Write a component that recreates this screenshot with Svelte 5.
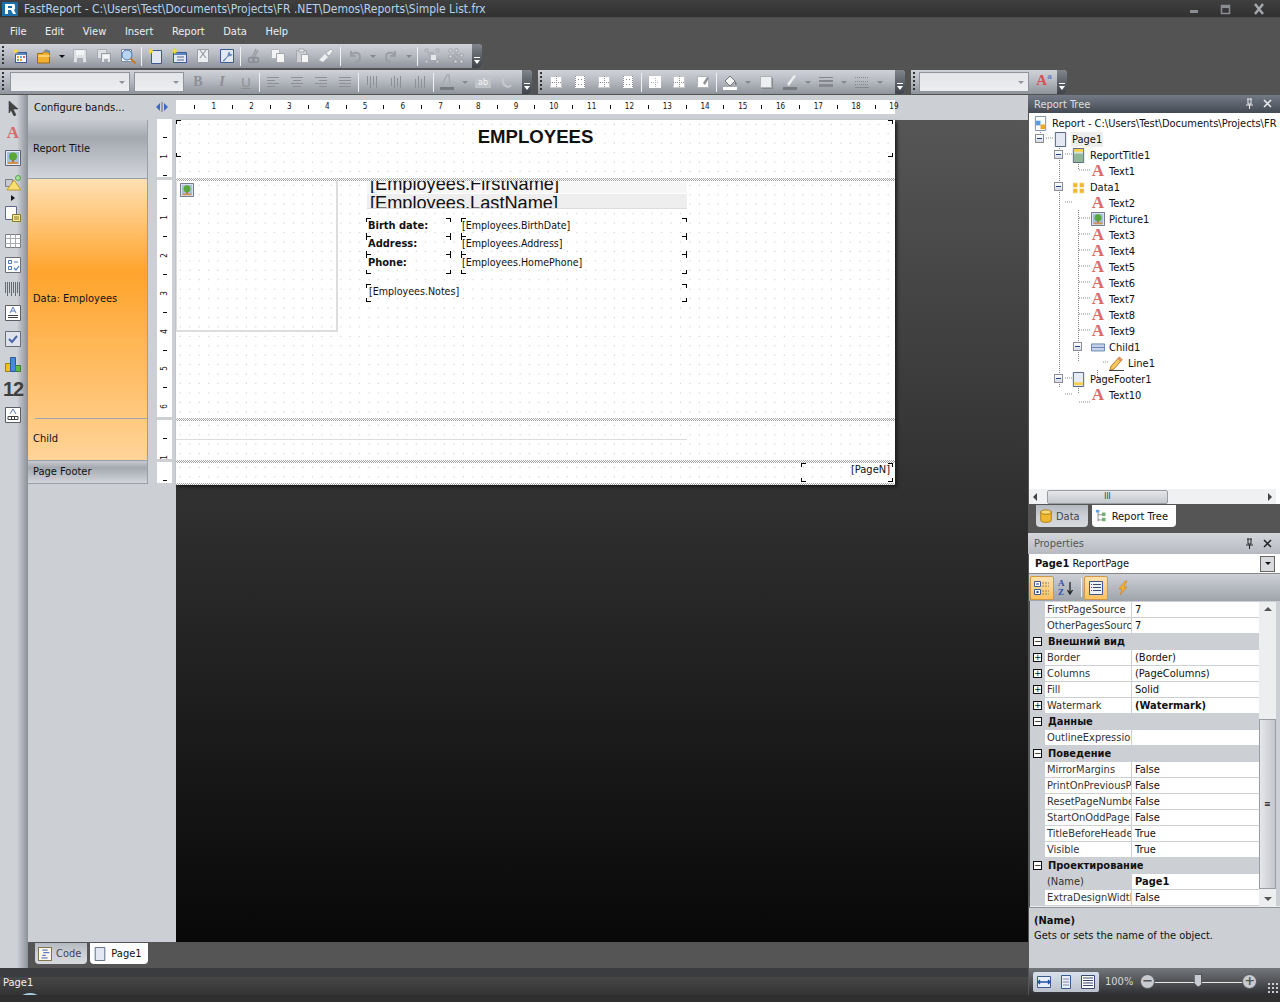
<script>
  // every icon is a 16x16 svg body
  const page = '<path d="M2.5 .5h11v15h-11z" fill="#e3e8f2" stroke="#4a5a78"/>'
  const ic = {
    arrow: '<path d="M4 1l9 8H8l3 6-2 1-3-6-2 3z" fill="#444" stroke="#222" stroke-width=".5"/>',
    newrep: '<rect x="3.5" y="4.5" width="11" height="10" fill="#fff" stroke="#3a5a90"/><path d="M4 5h10v2H4z" fill="#5a86c8"/><path d="M5 8h2v2H5z" fill="#e8a030"/><path d="M8 8h2v2H8z" fill="#60a8e0"/><path d="M11 8h2v2h-2z" fill="#e06060"/><path d="M5 11h2v2H5z" fill="#70b060"/><path d="M8 11h2v2H8z" fill="#e8a030"/><path d="M3.5 0l.8 2 2-.6-1 1.8 1.4 1-2 .4-.9 2-.9-2-2-.4 1.4-1-1-1.8 2 .6z" fill="#f8d838"/>',
    open: '<path d="M1.5 5.5h5l1-1.5h6v11h-12z" fill="#f0b030" stroke="#a06810"/><path d="M2 8h12" stroke="#fff0b0"/><path d="M8 3c1-2 4-2 5 0l1-1v3h-3l1-1c-1-1-2-1-3 0z" fill="#7088a8"/>',
    save: '<path d="M1.5 1.5h13v13h-13z" fill="#dfe1e5" stroke="#aaadb3"/><path d="M4 2h8v5H4z" fill="#f2f3f4"/><path d="M5 10h6v4H5z" fill="#a9acb2"/>',
    saveall: '<path d="M1.5 1.5h9v9h-9z" fill="#dfe1e5" stroke="#aaadb3"/><path d="M5.5 5.5h9v9h-9z" fill="#e6e7ea" stroke="#9a9da3"/><path d="M7 7h6v3H7z" fill="#f6f6f7"/><path d="M8 11h4v3H8z" fill="#a9acb2"/>',
    preview: '<path d="M1.500 1.500h10v12h-10z" fill="#fff" stroke="#7a8aa8"/><circle cx="7" cy="7" r="5" fill="#b8d4f0" stroke="#4a78b0"/><path d="M10.500 10.500l5 5" stroke="#c87820" stroke-width="2"/>',
    newpage: '<path d="M4.5 2.5h10v13h-10z" fill="#e3e8f2" stroke="#3a5a90"/><path d="M3.5 0l.8 2 2-.6-1 1.8 1.4 1-2 .4-.9 2-.9-2-2-.4 1.4-1-1-1.8 2 .6z" fill="#f8d838"/>',
    newdlg: '<path d="M2.5 4.5h13v10h-13z" fill="#e3e8f2" stroke="#3a5a90"/><path d="M3 5h12v2H3z" fill="#5a86c8"/><path d="M6 9h7M6 12h7" stroke="#5a6a88"/><path d="M3.5 0l.8 2 2-.6-1 1.8 1.4 1-2 .4-.9 2-.9-2-2-.4 1.4-1-1-1.8 2 .6z" fill="#f8d838"/>',
    delpage: '<path d="M2.5 1.5h11v13h-11z" fill="#eceef2" stroke="#9a9da3"/><path d="M5 2l3 4 3-4M5 10l3-4 3 4" fill="none" stroke="#9a9da3" stroke-width="1.2"/>',
    setup: '<path d="M1.5 1.5h13v13h-13z" fill="#e3e8f2" stroke="#3a5a90"/><path d="M3 13l5-5 1-4 3-1-1 2 1 1 2-1-1 3-4 1-4 5z" fill="#6a8ab8" stroke="#fff" stroke-width=".5"/>',
    cut: '<path d="M10 1L6 10M12 2L8 10" stroke="#9a9da3" stroke-width="1.5"/><circle cx="5" cy="12" r="2.5" fill="none" stroke="#8a8d93" stroke-width="1.5"/><circle cx="10" cy="12" r="2.5" fill="none" stroke="#8a8d93" stroke-width="1.5"/>',
    copy: '<path d="M1.5 1.5h8v9h-8z" fill="#f2f3f4" stroke="#b4b7bc"/><path d="M6.5 5.5h8v9h-8z" fill="#f6f6f7" stroke="#a4a7ac"/>',
    paste: '<path d="M2.5 2.5h10v12h-10z" fill="#cfd1d5" stroke="#a4a7ac"/><path d="M5 1h5v3H5z" fill="#e6e7ea" stroke="#a4a7ac"/><path d="M7.5 6.5h7v8h-7z" fill="#f6f6f7" stroke="#a4a7ac"/>',
    brush: '<path d="M1 12l6-6 3 3-5 5z" fill="#eceef0"/><path d="M8 5l5-4 2 2-4 5z" fill="#f4f4f5" stroke="#b0b3b8"/>',
    undo: '<path d="M4 3v5h5M4 8c2-5 9-4 9 1 0 3-2 5-5 5" fill="none" stroke="#9b9ea4" stroke-width="2"/>',
    redo: '<path d="M12 3v5H7M12 8c-2-5-9-4-9 1 0 3 2 5 5 5" fill="none" stroke="#9b9ea4" stroke-width="2"/>',
    group: '<path d="M1 1h3v3H1zM12 1h3v3h-3zM1 12h3v3H1zM12 12h3v3h-3z" fill="#c4c6ca" stroke="#9a9da3" stroke-width=".6"/><path d="M4 4h6v5H4z" fill="#aeb1b6"/><path d="M7 7h5v5H7z" fill="#e6e7ea"/>',
    ungroup: '<path d="M1 1h3v3H1zM7 1h3v3H7zM1 7h3v3H1zM7 7h3v3H7zM6 6h3v3H6zM12 6h3v3h-3zM6 12h3v3H6zM12 12h3v3h-3z" fill="#d6d8db" stroke="#8a8d93" stroke-width=".6"/>',
    alignl: '<path d="M2 3.500h12M2 6.500h8M2 9.500h12M2 12.500h8" stroke="#8d9096"/>',
    alignc: '<path d="M2 3.500h12M4 6.500h8M2 9.500h12M4 12.500h8" stroke="#8d9096"/>',
    alignr: '<path d="M2 3.500h12M6 6.500h8M2 9.500h12M6 12.500h8" stroke="#8d9096"/>',
    alignj: '<path d="M2 3.500h12M2 6.500h12M2 9.500h12M2 12.500h12" stroke="#8d9096"/>',
    vtop: '<path d="M3.500 2v9M6.500 2v12M9.500 2v9M12.500 2v12" stroke="#8d9096"/>',
    vmid: '<path d="M3.500 4v8M6.500 2v12M9.500 4v8M12.500 2v12" stroke="#8d9096"/>',
    vbot: '<path d="M3.500 5v9M6.500 2v12M9.500 5v9M12.500 2v12" stroke="#8d9096"/>',
    fcolor: '<path d="M3 11l5-10h2l1 10" fill="none" stroke="#a6a9ae" stroke-width="1.5"/><path d="M1 13h14v3H1z" fill="#767980"/>',
    rot: '<path d="M12 3c-4-3-9 0-8 5s6 6 8 3" fill="none" stroke="#c6c8cc" stroke-width="2"/>',
    bd1: '<path d="M2 2h12v12H2z" fill="#fff"/><path d="M2.500 2.500h11v11h-11zM2 8.500h12M8.500 2v12" fill="none" stroke="#8d9096" stroke-dasharray="1 1"/>',
    bd2: '<path d="M3 2h10v12H3z" fill="#fff"/><path d="M3.500 2v12M12.500 2v12M6.500 5v1M9.500 5v1M6.500 10v1M9.500 10v1" stroke="#85888e" stroke-dasharray="1 1"/>',
    bd3: '<path d="M2 2h12v12H2z" fill="#fff"/><path d="M8.500 4v9M4 8.500h8" stroke="#b0b3b8" stroke-dasharray="1 1"/>',
    bd5: '<path d="M2.500 2.500h11v11h-11z" fill="#fff" stroke="#b0b3b8"/><path d="M8 9l4-6 2 1-4 7z" fill="#8d9096"/>',
    fill: '<path d="M3 7l5-5 5 5-5 5z" fill="#f4f4f5" stroke="#6f7278"/><path d="M13 7c2 2 2 4 1 4s-1-2-1-4z" fill="#6f7278"/><path d="M1 13h14v3H1z" fill="#fff"/>',
    shadow: '<path d="M2.500 2.500h11v11h-11z" fill="#eeeff1" stroke="#aeb1b6"/><path d="M14.500 4v10.500H4" fill="none" stroke="#85888e"/>',
    lcolor: '<path d="M5 10L12 1l2 1-7 10z" fill="#eceef0"/><path d="M1 13h14v3H1z" fill="#767980"/>',
    lwidth: '<path d="M1 3h14v1H1z" fill="#85888e"/><path d="M1 6h14v2H1z" fill="#85888e"/><path d="M1 10h14v3H1z" fill="#85888e"/>',
    lstyle: '<path d="M1 3.500h14M1 7.500h14M1 10.500h14" stroke="#85888e" stroke-dasharray="1 1"/><path d="M1 13.500h14" stroke="#85888e"/>',
    picture: '<path d="M.5 .5h15v15H.5z" fill="#e8ecf4" stroke="#5a6478"/><path d="M2 2h12v12H2z" fill="#a8c0e0"/><circle cx="8" cy="6.500" r="4" fill="#58a838"/><path d="M7 10h2v3H7z" fill="#a87038"/><path d="M3 12h10v2H3z" fill="#d09050"/>',
    shapes: '<path d="M.5 4.500h7v7h-7z" fill="#c8cacf" stroke="#7a7d84"/><circle cx="13" cy="3" r="2.500" fill="#a8e0a0" stroke="#58a050"/><path d="M9 5l7 10H2z" fill="#f8e070" stroke="#c09830"/>',
    subrep: '<path d="M.5 .5h11v13H.5z" fill="#fff" stroke="#5a6a88"/><path d="M7.500 8.500h8v7h-8z" fill="#f8e8a0" stroke="#8a7a30"/><path d="M9 11h5M9 13h5" stroke="#8a7a30"/>',
    table: '<path d="M.5 1.500h15v13H.5z" fill="#fff" stroke="#7a7d84"/><path d="M.5 5.500h15M.5 10.500h15M5.500 1.500v13M10.500 1.500v13" stroke="#a8abb0"/>',
    matrix: '<path d="M.5 .5h15v15H.5z" fill="#fff" stroke="#6a6d74"/><path d="M3.500 3.500h3v3h-3zM3.500 9.500h3v3h-3z" fill="none" stroke="#4a78b0"/><path d="M9 5h4M9 11l2 2 3-4" fill="none" stroke="#4a78b0" stroke-width="1.200"/>',
    barcode: '<path d="M.5 1v11M2.500 1v14M4.500 1v11M6.500 1v14M8.500 1v11M10.500 1v14M12.500 1v11M14.500 1v14" stroke="#666a72"/>',
    rich: '<path d="M.5 .5h15v15H.5z" fill="#fff" stroke="#5a5d64"/><path d="M5 8l3-6 3 6M6 6h4" fill="none" stroke="#5a7ab8"/><path d="M3 10.500h10M3 12.500h10" stroke="#444"/>',
    check: '<path d="M.5 .5h15v15H.5z" fill="#dfe3ee" stroke="#6a6d74"/><path d="M4 8l3 3 5-6" fill="none" stroke="#4a68a8" stroke-width="2"/>',
    chart: '<path d="M.5 7.500h5v8h-5z" fill="#f0c020" stroke="#a08010"/><path d="M5.500 1.500h5v14h-5z" fill="#4a88d8" stroke="#2a5aa0"/><path d="M10.500 9.500h5v6h-5z" fill="#60b848" stroke="#3a8030"/>',
    cell: '<path d="M.5 .5h15v15H.5z" fill="#fff" stroke="#5a5d64"/><path d="M5 7l3-5 3 5" fill="none" stroke="#5a7ab8"/><path d="M3 9.500h10v3H3zM6.500 9.500v3M9.500 9.500v3" fill="none" stroke="#444"/>',
    report: '<path d="M2.500 .5h11v15h-11z" fill="#fff" stroke="#7a8aa8"/><path d="M3 5h5v5H3z" fill="#5a9ae0"/><path d="M8 9h5v5H8z" fill="#f0a820"/>',
    page,
    title: '<path d="M2.500 .5h11v15h-11z" fill="#d8e4d8" stroke="#4a5a78"/><path d="M3 1h10v3H3z" fill="#f8d048"/><path d="M3 6h10v9H3z" fill="#90b898"/>',
    data: '<path d="M2 3h5v5H2zM9 3h5v5H9zM2 9h5v5H2zM9 9h5v5H9z" fill="#f0b830" stroke="#fff" stroke-width=".5"/>',
    child: '<path d="M.5 4.500h15v8H.5z" fill="#c8d4ec" stroke="#5a7aa8"/><path d="M.5 8.500h15" stroke="#5a7aa8"/>',
    pencil: '<path d="M2 11L11 1l3 3-9 10-4 1z" fill="#f8c860" stroke="#b07820"/><path d="M11 1l3 3-2 2-3-3z" fill="#e89060"/><path d="M0 15.500h16" stroke="#333"/>',
    footer: '<path d="M2.500 .5h11v15h-11z" fill="#e6ebf4" stroke="#4a5a78"/><path d="M3 11h10v3H3z" fill="#f8d048"/>',
    db: '<path d="M2 3h12v10c0 3-12 3-12 0z" fill="#f0b830" stroke="#a87810"/><ellipse cx="8" cy="3.500" rx="6" ry="2.500" fill="#f8d878" stroke="#a87810"/>',
    rtree: '<path d="M3.500 2v12M3 6.500h5M3 12.500h5" stroke="#888" fill="none"/><path d="M1 1h4v3H1z" fill="#60a0e0"/><path d="M8 4h4v4H8z" fill="#70b070"/><path d="M8 10h4v4H8z" fill="#70b070"/>',
    code: '<path d="M.5 .5h15v15H.5z" fill="#fdf8e8" stroke="#6a5a30"/><path d="M5 3.500h6M6 6.500h7M5 9.500h4M4 12.500h7" stroke="#2048c0"/>',
    cat: '<path d="M.5 1.500h6v5h-6zM.5 9.500h6v5h-6z" fill="#fff" stroke="#3a5a90"/><path d="M2 4h3M2 12h3M3.500 11v2" stroke="#204080"/><path d="M8 3h7M8 6h7M8 11h7M8 14h7" stroke="#8a8060" stroke-dasharray="2 1"/>',
    az: '<path d="M12 2v11M9.500 10l2.500 4 2.500-4" fill="none" stroke="#222" stroke-width="1.300"/>',
    list: '<path d="M1.500 1.500h13v13h-13z" fill="#eef2fa" stroke="#3a5a90"/><path d="M3 4.500h1M5 4.500h8M3 7.500h1M5 7.500h8M3 10.500h1M5 10.500h8" stroke="#3a4a70"/>',
    bolt: '<path d="M10 1L4 9h3l-2 6 7-8H9l3-6z" fill="#f0b030" stroke="#c87020" stroke-width=".5"/>',
    fit: '<path d="M1.500 2.500h13v11h-13z" fill="#e8eefa" stroke="#3a5a90"/><path d="M2 8h12M4 6L2 8l2 2M12 6l2 2-2 2" fill="none" stroke="#2050a0" stroke-width="1.300"/>',
    one: '<path d="M3.500 1.500h9v13h-9z" fill="#e8eefa" stroke="#3a5a90"/><path d="M5 5h6M5 8h6M5 11h6" stroke="#7a8aa8"/>',
    lines: '<path d="M1.500 1.500h13v13h-13z" fill="#fff" stroke="#3a4a70"/><path d="M3 4h10M3 6.500h10M3 9h10M3 11.500h10" stroke="#3a4a70"/>'
  }

  const tools1 = [
    { i: 'newrep' }, { i: 'open' }, { drop: 1, dark: 1 }, { i: 'save' }, { i: 'saveall' }, { i: 'preview' }, { sep: 1 },
    { i: 'newpage' }, { i: 'newdlg' }, { i: 'delpage' }, { i: 'setup' }, { sep: 1 },
    { i: 'cut' }, { i: 'copy' }, { i: 'paste' }, { i: 'brush' }, { sep: 1, wide: 1 },
    { i: 'undo' }, { drop: 1 }, { i: 'redo' }, { drop: 1 }, { sep: 1, wide: 1 }, { i: 'group' }, { i: 'ungroup' }
  ]
  const tools2a = [
    { t: 'B', c: 'b' }, { t: 'I', c: 'it' }, { t: 'U', c: 'un' }, { sep: 1 },
    { i: 'alignl' }, { i: 'alignc' }, { i: 'alignr' }, { i: 'alignj' }, { sep: 1 },
    { i: 'vtop' }, { i: 'vmid' }, { i: 'vbot' }, { sep: 1 },
    { i: 'fcolor' }, { drop: 1 }, { t: 'ab', c: 'abx' }, { i: 'rot' }
  ]
  const tools2b = [
    { i: 'bd1' }, { i: 'bd2' }, { i: 'bd1' }, { i: 'bd2' }, { sep: 1 },
    { i: 'bd3' }, { i: 'bd1' }, { i: 'bd5' }, { sep: 1 },
    { i: 'fill' }, { drop: 1 }, { i: 'shadow' }, { i: 'lcolor' }, { drop: 1 }, { i: 'lwidth' }, { drop: 1 }, { i: 'lstyle' }, { drop: 1 }
  ]
  const palette = [
    { i: 'arrow', h: 25 }, { a: 1, h: 25 }, { i: 'picture', h: 25 }, { i: 'shapes', h: 25 }, { more: 1, h: 5 },
    { i: 'subrep', h: 28 }, { i: 'table', h: 25 }, { i: 'matrix', h: 24 }, { i: 'barcode', h: 23 },
    { i: 'rich', h: 26 }, { i: 'check', h: 25 }, { i: 'chart', h: 25 }, { num: 1, h: 27 }, { i: 'cell', h: 24 }
  ]

  const menu = ['File', 'Edit', 'View', 'Insert', 'Report', 'Data', 'Help']

  const tree = [
    { x: 4, i: 'report', t: 'Report - C:\\Users\\Test\\Documents\\Projects\\FR .NET\\Demos\\Reports\\Simple List.frx' },
    { x: 24, i: 'page', t: 'Page1', tg: 11, sel: 1 },
    { x: 42, i: 'title', t: 'ReportTitle1', tg: 30 },
    { x: 62, a: 1, t: 'Text1' },
    { x: 42, i: 'data', t: 'Data1', tg: 30 },
    { x: 62, a: 1, t: 'Text2' },
    { x: 62, i: 'picture', t: 'Picture1', w: 14 },
    { x: 62, a: 1, t: 'Text3' },
    { x: 62, a: 1, t: 'Text4' },
    { x: 62, a: 1, t: 'Text5' },
    { x: 62, a: 1, t: 'Text6' },
    { x: 62, a: 1, t: 'Text7' },
    { x: 62, a: 1, t: 'Text8' },
    { x: 62, a: 1, t: 'Text9' },
    { x: 62, i: 'child', t: 'Child1', tg: 49, w: 14 },
    { x: 80, i: 'pencil', t: 'Line1' },
    { x: 42, i: 'footer', t: 'PageFooter1', tg: 30 },
    { x: 62, a: 1, t: 'Text10' }
  ]

  const props = [
    { n: 'FirstPageSource', v: '7' },
    { n: 'OtherPagesSource', v: '7' },
    { cat: 'Внешний вид' },
    { n: 'Border', v: '(Border)', plus: 1 },
    { n: 'Columns', v: '(PageColumns)', plus: 1 },
    { n: 'Fill', v: 'Solid', plus: 1 },
    { n: 'Watermark', v: '(Watermark)', plus: 1, bold: 1 },
    { cat: 'Данные' },
    { n: 'OutlineExpression', v: '' },
    { cat: 'Поведение' },
    { n: 'MirrorMargins', v: 'False' },
    { n: 'PrintOnPreviousPage', v: 'False' },
    { n: 'ResetPageNumber', v: 'False' },
    { n: 'StartOnOddPage', v: 'False' },
    { n: 'TitleBeforeHeader', v: 'True' },
    { n: 'Visible', v: 'True' },
    { cat: 'Проектирование' },
    { n: '(Name)', v: 'Page1', bold: 1, sel: 1 },
    { n: 'ExtraDesignWidth', v: 'False' }
  ]

  const cm = Array.from({ length: 19 }, (_, k) => k + 1)
  const vbands = [
    { h: 58, n: 1 },
    { h: 237, n: 6 },
    { h: 39, n: 1 },
    { h: 21, n: 0 }
  ]
  const vcm = (n) => Array.from({ length: n + 1 }, (_, k) => k + 1)
</script>

{#snippet icon(name, size = 16)}
  <svg class="ico" width={size} height={size} viewBox="0 0 16 16">{@html ic[name]}</svg>
{/snippet}

{#snippet toolItems(items)}
  {#each items as it}
    {#if it.sep}
      <span class="sep" class:wide={it.wide}></span>
    {:else if it.drop}
      <span class="drop" class:dark={it.dark}><i></i></span>
    {:else if it.t}
      <span class="tool {it.c}">{it.t}</span>
    {:else}
      <span class="tool">{@render icon(it.i)}</span>
    {/if}
  {/each}
{/snippet}

{#snippet over()}
  <span class="over"><b></b><i></i></span>
{/snippet}

{#snippet pane(title, light)}
  <div class="pane-head" class:light>
    <span>{title}</span>
    <svg width="34" height="12" viewBox="0 0 34 12">
      <path d="M4 1h5M5 1v5h3V1M3 7h7M6.500 7v4" fill="none" stroke={light ? '#222' : '#eee'} />
      <path d="M21 2l7 7M28 2l-7 7" stroke={light ? '#222' : '#eee'} stroke-width="1.500" />
    </svg>
  </div>
{/snippet}

<div class="app">
  <header class="title">
    <svg class="logo" width="16" height="14" viewBox="0 0 16 14">
      <path d="M0 0h16v14H0z" fill="#1c6fa8" />
      <path d="M3 2h9l1 1v4l-1 1 2 4h-3L9 8H6v4H3zM6 4v2h4V4z" fill="#fff" />
    </svg>
    <span class="title-text">FastReport - C:\Users\Test\Documents\Projects\FR .NET\Demos\Reports\Simple List.frx</span>
    <span class="win">
      <svg width="90" height="14" viewBox="0 0 90 14">
        <path d="M3 8h8v3H3z" fill="#8a8d92" />
        <path d="M34.500 3.500h8v8h-8z" fill="none" stroke="#8a8d92" stroke-width="1.500" /><path d="M34 3h9v3h-9z" fill="#8a8d92" />
        <path d="M68 2l8 10M76 2l-8 10" stroke="#a4a7ac" stroke-width="2.500" />
      </svg>
    </span>
  </header>

  <nav class="menu">
    {#each menu as m}<span>{m}</span>{/each}
  </nav>

  <div class="bars">
    <div class="row">
      <div class="bar" style="width:482px">
        <span class="grip"></span>
        {@render toolItems(tools1)}
        {@render over()}
      </div>
    </div>
    <div class="row">
      <div class="bar" style="width:532px">
        <span class="grip"></span>
        <span class="combo" style="width:120px"></span>
        <span class="combo" style="width:50px"></span>
        {@render toolItems(tools2a)}
        {@render over()}
      </div>
      <div class="bar" style="width:367px">
        <span class="grip tight"></span>
        {@render toolItems(tools2b)}
        {@render over()}
      </div>
      <div class="bar" style="width:156px">
        <span class="grip tight"></span>
        <span class="combo" style="width:110px"></span>
        <span class="tool aa">A<sup>a</sup></span>
        {@render over()}
      </div>
    </div>
  </div>

  <div class="body">
    <div class="left">
      <div class="upper">
        <aside class="palette">
          {#each palette as p}
            <span class="pal" style="height:{p.h}px">
              {#if p.a}<span class="a-ico">A</span>
              {:else if p.more}<i class="more"></i>
              {:else if p.num}<span class="num">12</span>
              {:else}{@render icon(p.i)}{/if}
            </span>
          {/each}
        </aside>

        <section class="designer">
          <div class="rule-row">
            <span class="conf">Configure bands...</span>
            <span class="arrows"><i class="la"></i><i class="bar-mid"></i><i class="ra"></i></span>
            <div class="hruler">
              {#each cm as k}
                <span class="cell"><i></i></span><span class="cell">{k}</span>
              {/each}
            </div>
          </div>

          <div class="canvas-row">
            <div class="bands">
              <div class="band gray" style="height:59px"><span>Report Title</span></div>
              <div class="band orange" style="height:282px">
                <div class="band-data"><span>Data: Employees</span></div>
                <div class="band-child"><span>Child</span></div>
              </div>
              <div class="band gray" style="height:23px"><span>Page Footer</span></div>
            </div>

            <div class="vruler">
              {#each vbands as b}
                <div class="vseg" style="height:{b.h}px">
                  <span class="vcell"><i></i></span>
                  {#each vcm(b.n) as k}
                    <span class="vcell"><em>{k}</em></span>
                    {#if k <= b.n}<span class="vcell"><i></i></span>{/if}
                  {/each}
                </div>
              {/each}
            </div>

            <div class="workspace">
              <div class="page">
                <div class="pband" style="height:58px">
                  <div class="obj" style="left:0;top:0;width:717px;height:37px">
                    <span class="heading">EMPLOYEES</span>
                  </div>
                </div>
                <div class="hatch"></div>
                <div class="pband" style="height:237px">
                  <div class="pic" style="left:0;top:0;width:156px;height:147px">{@render icon('picture', 14)}</div>
                  <div class="big-field" style="left:191px;top:0;width:320px;height:12px"><span style="margin-top:-6px">[Employees.FirstName]</span></div>
                  <div class="big-field shade" style="left:191px;top:13px;width:320px;height:15px"><span style="margin-top:0">[Employees.LastName]</span></div>
                  <div class="obj strong" style="left:190px;top:37px;width:85px;height:19px">Birth date:</div>
                  <div class="obj strong" style="left:190px;top:55px;width:85px;height:19px">Address:</div>
                  <div class="obj strong" style="left:190px;top:73px;width:85px;height:20px"><span class="nudge">Phone:</span></div>
                  <div class="obj field" style="left:285px;top:37px;width:226px;height:19px">[Employees.BirthDate]</div>
                  <div class="obj field" style="left:285px;top:55px;width:226px;height:19px">[Employees.Address]</div>
                  <div class="obj field" style="left:285px;top:73px;width:226px;height:20px"><span class="nudge">[Employees.HomePhone]</span></div>
                  <div class="obj field notes" style="left:190px;top:103px;width:321px;height:18px">[Employees.Notes]</div>
                </div>
                <div class="hatch"></div>
                <div class="pband" style="height:39px">
                  <div class="rule-line" style="left:0;top:18px;width:511px"></div>
                </div>
                <div class="hatch"></div>
                <div class="pband" style="height:20px">
                  <div class="obj pagen" style="left:625px;top:0;width:92px;height:19px">[PageN]</div>
                </div>
                <div class="hatch"></div>
              </div>
            </div>
          </div>

          <div class="doc-tabs">
            <span class="tab dim">{@render icon('code', 14)} Code</span>
            <span class="tab on">{@render icon('page', 14)} Page1</span>
          </div>
        </section>
      </div>

      <footer class="status">
        <span>Page1</span>
        <i class="orb"></i>
      </footer>
    </div>

    <aside class="dock">
      <div class="tree-pane">
        {@render pane('Report Tree', false)}
        <div class="tree">
          <svg class="guides" width="100" height="300" viewBox="0 0 100 300">
            <path d="M11.500 16v8M30.500 32v242M49.500 48v8M49.500 96v152M68.500 256v8M49.500 272v8" fill="none" stroke="#888" stroke-dasharray="1 1" />
            <path d="M17 24h7M36 40h7M36 88h7M36 264h7M36 280h7M50 56h12M50 104h12M50 120h12M50 136h12M50 152h12M50 168h12M50 184h12M50 200h12M50 216h12M74 248h6M50 288h12M69 264h11" fill="none" stroke="#888" stroke-dasharray="1 1" />
          </svg>
          {#each tree as row}
            <div class="tnode" style="padding-left:{row.x}px">
              {#if row.tg}<span class="toggle" style="left:{row.tg - 5}px"><i></i></span>{/if}
              {#if row.a}<span class="a-ico">A</span>
              {:else}{@render icon(row.i, row.w || 15)}{/if}
              <span class="tlabel" class:sel={row.sel}>{row.t}</span>
            </div>
          {/each}
        </div>
        <div class="hscroll">
          <i class="sa left-a"></i>
          <span class="sthumb">III</span>
          <i class="sa right-a"></i>
        </div>
        <div class="dock-tabs">
          <span class="tab dim">{@render icon('db', 14)} Data</span>
          <span class="tab on">{@render icon('rtree', 14)} Report Tree</span>
        </div>
      </div>

      <div class="prop-pane">
        {@render pane('Properties', true)}
        <div class="prop-combo">
          <span><b>Page1</b> ReportPage</span>
          <span class="combo-btn"><i></i></span>
        </div>
        <div class="prop-tools">
          <span class="ptool active">{@render icon('cat')}</span>
          <span class="ptool"><em class="az-t">A<br />Z</em>{@render icon('az')}</span>
          <span class="sep"></span>
          <span class="ptool active">{@render icon('list')}</span>
          <span class="ptool">{@render icon('bolt')}</span>
        </div>
        <div class="prop-grid">
          <div class="rows">
            {#each props as p}
              {#if p.cat}
                <div class="pr cat"><span class="box">−</span><span>{p.cat}</span></div>
              {:else}
                <div class="pr">
                  <span class="gut">{#if p.plus}<span class="box">+</span>{/if}</span>
                  <span class="pn" class:cur={p.sel}>{p.n}</span>
                  <span class="pv" class:pb={p.bold}>{p.v}</span>
                </div>
              {/if}
            {/each}
          </div>
          <div class="vscroll">
            <i class="up"></i>
            <span class="vspace"></span>
            <span class="vthumb">≡</span>
            <i class="down"></i>
          </div>
        </div>
        <div class="descr">
          <b>(Name)</b>
          <span>Gets or sets the name of the object.</span>
        </div>
        <div class="zoombar">
          <span class="views">{@render icon('fit')}{@render icon('one')}{@render icon('lines')}</span>
          <span class="pct">100%</span>
          <span class="slider">
            <i class="circle">−</i>
            <i class="track"></i>
            <i class="thumb"></i>
            <i class="circle">+</i>
          </span>
          <span class="resize"></span>
        </div>
      </div>
    </aside>
  </div>
</div>

<style>
  :global(body) {
    margin: 0;
    background: #2f2f2f;
  }
  .app {
    width: 1280px;
    height: 995px;
    display: flex;
    flex-direction: column;
    overflow: hidden;
    font: 11px "DejaVu Sans Condensed", "Liberation Sans", sans-serif;
    color: #111;
    background: #535353;
  }
  .ico {
    display: block;
    flex: none;
  }

  /* window chrome */
  .title {
    height: 17px;
    flex: none;
    display: flex;
    align-items: center;
    padding-left: 2px;
    background: linear-gradient(#3f3f3f, #313131);
  }
  .logo {
    margin-right: 6px;
  }
  .title-text {
    font-size: 12px;
    color: #b6d2ec;
    white-space: nowrap;
  }
  .win {
    margin-left: auto;
    margin-right: 3px;
    height: 14px;
  }
  .menu {
    height: 26px;
    flex: none;
    display: flex;
    align-items: center;
    padding: 2px 0 0 10px;
    gap: 18.600px;
    color: #eee;
    background: #535353;
    border-top: 1px solid #4b4b4b;
    box-sizing: border-box;
  }

  /* toolbars */
  .bars {
    height: 52px;
    flex: none;
    padding-top: 1px;
    box-sizing: border-box;
    display: flex;
    flex-direction: column;
    gap: 2px;
  }
  .row {
    display: flex;
    gap: 6px;
    height: 24px;
  }
  .bar {
    height: 24px;
    flex: none;
    display: flex;
    align-items: center;
    box-sizing: border-box;
    position: relative;
    padding-right: 12px;
    border-radius: 0 4px 4px 0;
    background: linear-gradient(#cfd2d7, #b7bac1 45%, #8f939b);
  }
  .grip {
    width: 8px;
    height: 20px;
    flex: none;
    background: radial-gradient(circle at 3px 1px, #333 1px, transparent 1px) 0 0/8px 4px;
  }
  .grip.tight {
    width: 6px;
  }
  .tool {
    width: 24px;
    height: 22px;
    flex: none;
    display: flex;
    align-items: center;
    justify-content: center;
    color: #8d9096;
  }
  .b { font: bold 14px "Liberation Serif", serif; }
  .it { font: italic bold 14px "Liberation Serif", serif; }
  .un { font: 13px "Liberation Sans", sans-serif; text-decoration: underline; }
  .abx {
    font-size: 9px;
    color: #f4f4f5;
    background: linear-gradient(#bfc2c7, #bfc2c7) center/16px 12px no-repeat;
  }
  .aa {
    font: bold 15px "Liberation Serif", serif;
    color: #d8534f;
    align-items: flex-start;
    padding-top: 1px;
    width: 26px;
    box-sizing: border-box;
  }
  .aa sup {
    font-size: 9px;
    color: #6a78c8;
    line-height: 1;
  }
  .sep {
    width: 1px;
    height: 19px;
    margin: 0 1px;
    flex: none;
    background: #f0f1f3;
  }
  .sep.wide {
    margin: 0 2px;
  }
  .drop {
    width: 12px;
    flex: none;
    display: flex;
    justify-content: center;
  }
  .drop i {
    border: 3px solid transparent;
    border-top: 3px solid #85888e;
    border-bottom: 0;
  }
  .drop.dark i {
    border-top-color: #111;
  }
  .combo {
    height: 20px;
    flex: none;
    margin: 0 2px;
    box-sizing: border-box;
    border: 1px solid #8f939b;
    background: linear-gradient(#e4e5e8, #eceef0);
    position: relative;
  }
  .combo::after {
    content: "";
    position: absolute;
    right: 4px;
    top: 8px;
    border: 3px solid transparent;
    border-top-color: #8f939b;
    border-bottom: 0;
  }
  .over {
    position: absolute;
    right: 0;
    top: 0;
    bottom: 0;
    width: 10px;
    border-radius: 0 4px 4px 0;
    background: linear-gradient(#80848c, #3f4248);
  }
  .over b {
    position: absolute;
    left: 2px;
    top: 13px;
    width: 6px;
    height: 1px;
    background: #fff;
  }
  .over i {
    position: absolute;
    left: 2px;
    top: 16px;
    border: 3px solid transparent;
    border-top: 4px solid #fff;
    border-bottom: 0;
  }

  /* layout */
  .body {
    flex: 1;
    min-height: 0;
    display: flex;
  }
  .left {
    width: 1028px;
    flex: none;
    display: flex;
    flex-direction: column;
  }
  .upper {
    flex: 1;
    min-height: 0;
    display: flex;
  }
  .palette {
    width: 28px;
    flex: none;
    display: flex;
    flex-direction: column;
    background: linear-gradient(90deg, #ced1d6 60%, #8b8f97);
  }
  .pal {
    display: flex;
    align-items: center;
    justify-content: center;
    padding-right: 2px;
    flex: none;
  }
  .more {
    border: 3px solid transparent;
    border-left: 4px solid #111;
    border-right: 0;
  }
  .num {
    font: bold 20px "Liberation Sans", sans-serif;
    letter-spacing: -1px;
    color: #3f3f3f;
  }
  .a-ico {
    font: bold 17px "Liberation Serif", serif;
    color: #d8686a;
    width: 14px;
    text-align: center;
    line-height: 16px;
    flex: none;
  }

  .designer {
    flex: 1;
    display: flex;
    flex-direction: column;
    min-width: 0;
    background: #ccd0d5;
  }
  .rule-row {
    height: 25px;
    flex: none;
    display: flex;
  }
  .conf {
    width: 128px;
    flex: none;
    padding-left: 6px;
    box-sizing: border-box;
    line-height: 25px;
    white-space: nowrap;
  }
  .arrows {
    width: 20px;
    flex: none;
    display: flex;
    align-items: center;
    gap: 1px;
    padding-bottom: 1px;
    box-sizing: border-box;
  }
  .la, .ra {
    border: 4px solid transparent;
    border-right: 4px solid #3a6ac0;
    border-left: 0;
  }
  .ra {
    border-left: 4px solid #3a6ac0;
    border-right: 0;
  }
  .bar-mid {
    width: 2px;
    height: 10px;
    background: #9a9da3;
  }
  .hruler {
    width: 719px;
    height: 14px;
    margin-top: 5px;
    padding-left: 9.500px;
    box-sizing: border-box;
    background: #fff;
    display: flex;
    font-size: 8px;
    line-height: 14px;
    flex: none;
  }
  .cell {
    width: 18.900px;
    flex: none;
    display: flex;
    justify-content: center;
    align-items: center;
  }
  .cell i {
    width: 1px;
    height: 4px;
    background: #111;
  }
  .canvas-row {
    flex: 1;
    min-height: 0;
    display: flex;
  }
  .bands {
    width: 120px;
    flex: none;
    display: flex;
    flex-direction: column;
    margin-right: 9px;
  }
  .band {
    flex: none;
    box-sizing: border-box;
    border-right: 1px solid #9a9ea6;
    border-bottom: 1px solid #9a9ea6;
    display: flex;
    align-items: center;
    padding-left: 5px;
  }
  .band.gray {
    padding-bottom: 2px;
    background: linear-gradient(#c8ccd1, #a4a8b0 30%, #d2d5da);
  }
  .band.orange {
    display: block;
    padding: 0;
    background: linear-gradient(#ffe0b4, #ffa42c 33%, #ffd498);
  }
  .band-data {
    height: 239px;
    display: flex;
    align-items: center;
    padding-left: 5px;
    box-sizing: border-box;
    padding-bottom: 1px;
  }
  .band-child {
    height: 42px;
    margin-left: 7px;
    border-top: 1px solid #9ea2aa;
    display: flex;
    align-items: center;
    box-sizing: border-box;
  }
  .band-child span {
    margin-left: -2px;
    margin-top: -2px;
  }
  .vruler {
    width: 15px;
    flex: none;
    margin-top: -1px;
    margin-right: 4px;
    display: flex;
    flex-direction: column;
    gap: 3px;
  }
  .vseg {
    background: #fff;
    padding-top: 9.500px;
    box-sizing: border-box;
    overflow: hidden;
    flex: none;
  }
  .vcell {
    height: 18.900px;
    display: flex;
    align-items: center;
    justify-content: center;
    font-size: 8px;
  }
  .vcell i {
    width: 4px;
    height: 1px;
    background: #111;
  }
  .vcell em {
    font-style: normal;
    transform: rotate(-90deg);
  }
  .workspace {
    flex: 1;
    min-width: 0;
    background: linear-gradient(#565656, #333 42%, #080808);
  }
  .page {
    width: 719px;
    background: #fff;
    box-shadow: 2px 2px 3px #1c1c1c;
  }
  .pband {
    position: relative;
    background: radial-gradient(circle at 1px 1px, #a8a8a8 .5px, transparent .7px) 3px 3px/9.450px 9.450px;
  }
  .hatch {
    height: 3px;
    background: repeating-conic-gradient(#a6a6a6 0 25%, #fff 0 50%) 0 0/2px 2px;
  }
  .hatch:last-child {
    height: 2px;
  }

  /* report objects sit on the page at their own coordinates */
  .obj {
    position: absolute;
    box-sizing: border-box;
    padding-left: 2px;
    white-space: nowrap;
    --c: #000;
    background:
      linear-gradient(var(--c), var(--c)) 0 0/5px 1px no-repeat,
      linear-gradient(var(--c), var(--c)) 0 0/1px 4px no-repeat,
      linear-gradient(var(--c), var(--c)) 100% 0/5px 1px no-repeat,
      linear-gradient(var(--c), var(--c)) 100% 0/1px 4px no-repeat,
      linear-gradient(var(--c), var(--c)) 0 100%/5px 1px no-repeat,
      linear-gradient(var(--c), var(--c)) 0 100%/1px 4px no-repeat,
      linear-gradient(var(--c), var(--c)) 100% 100%/5px 1px no-repeat,
      linear-gradient(var(--c), var(--c)) 100% 100%/1px 4px no-repeat;
  }
  .heading {
    display: block;
    text-align: center;
    font: bold 18.600px "Liberation Sans", sans-serif;
    line-height: 34px;
  }
  .strong {
    font: bold 11px "DejaVu Sans Condensed", sans-serif;
    line-height: 16px;
  }
  .nudge {
    position: relative;
    top: 1px;
  }
  .field {
    font-size: 10.600px;
    padding-left: 1px;
    line-height: 15px;
  }
  .field.notes {
    padding-left: 3px;
  }
  .pagen {
    text-align: right;
    padding-right: 3px;
    line-height: 13px;
  }
  .pic {
    position: absolute;
    border: solid #dcdcdc;
    border-width: 0 2px 2px 1px;
    padding: 2px 0 0 3px;
  }
  .big-field {
    position: absolute;
    overflow: hidden;
    font: 18.200px "Liberation Sans", sans-serif;
    line-height: 18px;
    padding-left: 3px;
    box-sizing: border-box;
    white-space: nowrap;
    background: #f6f6f6;
  }
  .big-field span {
    display: block;
  }
  .big-field.shade {
    background: #eee;
    border-bottom: 1px solid #dcdcdc;
  }
  .rule-line {
    position: absolute;
    height: 1px;
    background: #dcdcdc;
  }

  /* document tabs */
  .doc-tabs {
    height: 26px;
    flex: none;
    background: #555;
    display: flex;
    gap: 3px;
    padding: 1px 0 0 7px;
    box-sizing: border-box;
  }
  .tab {
    height: 21px;
    display: flex;
    align-items: center;
    gap: 4px;
    padding: 0 6px 0 3px;
    border-radius: 0 0 4px 4px;
    box-sizing: border-box;
    white-space: nowrap;
  }
  .tab.on {
    background: #fdfdfe;
  }
  .tab.dim {
    color: #445;
    background: linear-gradient(#b4b8c0, #ccd0d5 50%, #d6d9dd);
  }
  .status {
    height: 27px;
    flex: none;
    position: relative;
    color: #eee;
    padding: 9px 0 0 3px;
    box-sizing: border-box;
    line-height: 12px;
    background: linear-gradient(#3a3c40 0 9px, #474747 9px, #333);
  }
  .orb {
    position: absolute;
    left: 15px;
    top: 25px;
    width: 30px;
    height: 30px;
    border-radius: 50%;
    background: #a8cfe4;
  }

  /* right dock */
  .dock {
    flex: 1;
    min-width: 0;
    background: #555;
    display: flex;
    flex-direction: column;
  }
  .tree-pane {
    height: 433px;
    flex: none;
    display: flex;
    flex-direction: column;
  }
  .pane-head {
    height: 18px;
    flex: none;
    display: flex;
    align-items: center;
    justify-content: space-between;
    padding: 0 3px 0 6px;
    color: #ddd;
    background: linear-gradient(#747a86, #444a54);
  }
  .pane-head.light {
    height: 21px;
    color: #555;
    background: linear-gradient(#d3d6da, #b6b9c0);
  }
  .tree {
    height: 376px;
    flex: none;
    background: #fff;
    position: relative;
    overflow: hidden;
    margin-left: 1px;
    padding-top: 2px;
    box-sizing: border-box;
  }
  .guides {
    position: absolute;
    left: 0;
    top: 1px;
  }
  .tnode {
    height: 16px;
    display: flex;
    align-items: center;
    gap: 3px;
    position: relative;
    white-space: nowrap;
    box-sizing: border-box;
  }
  .tlabel {
    padding: 0 1px;
    line-height: 15px;
  }
  .tlabel.sel {
    background: #eee;
  }
  .toggle {
    position: absolute;
    top: 3px;
    width: 9px;
    height: 9px;
    box-sizing: border-box;
    border: 1px solid #8a8d93;
    background: linear-gradient(#fff, #d6dae2);
    display: flex;
    align-items: center;
    justify-content: center;
  }
  .toggle i {
    width: 5px;
    height: 1px;
    background: #23457e;
  }
  .hscroll {
    height: 15px;
    flex: none;
    margin-left: 1px;
    background: #f0f1f3;
    display: flex;
    align-items: center;
    padding: 0 4px;
    border-right: 4px solid #fff;
    box-sizing: border-box;
  }
  .sa {
    border: 4px solid transparent;
  }
  .left-a {
    border-right: 4px solid #444;
    border-left: 0;
  }
  .right-a {
    border-left: 4px solid #444;
    border-right: 0;
    margin-left: auto;
  }
  .sthumb {
    margin-left: 10px;
    width: 121px;
    height: 14px;
    box-sizing: border-box;
    border: 1px solid #9a9da3;
    border-radius: 2px;
    background: linear-gradient(#e6e7ea, #c4c7cc);
    text-align: center;
    font-size: 8px;
    line-height: 12px;
    color: #333;
  }
  .dock-tabs {
    display: flex;
    gap: 4px;
    padding: 1px 0 0 8px;
  }
  .dock-tabs .tab {
    height: 22px;
    gap: 3px;
    padding: 0 8px 0 3px;
  }
  .prop-pane {
    margin-top: 5px;
    flex: 1;
    min-height: 0;
    display: flex;
    flex-direction: column;
  }
  .prop-combo {
    height: 20px;
    flex: none;
    margin-left: 1px;
    background: #fff;
    display: flex;
    align-items: center;
    justify-content: space-between;
    padding: 0 5px 0 6px;
    box-sizing: border-box;
    border-bottom: 1px solid #888;
  }
  .prop-combo b {
    font-weight: bold;
  }
  .combo-btn {
    width: 15px;
    height: 16px;
    box-sizing: border-box;
    border: 1px solid #666;
    background: #d8dade;
    display: flex;
    align-items: center;
    justify-content: center;
  }
  .combo-btn i {
    border: 3px solid transparent;
    border-top: 3px solid #111;
    border-bottom: 0;
  }
  .prop-tools {
    height: 27px;
    flex: none;
    margin-left: 1px;
    display: flex;
    align-items: center;
    padding-left: 1px;
    background: linear-gradient(#cdd0d5, #9fa3ab);
  }
  .ptool {
    height: 24px;
    width: 24px;
    flex: none;
    display: flex;
    align-items: center;
    justify-content: center;
    position: relative;
  }
  .ptool.active {
    background: linear-gradient(#ffe2b0, #ffc060);
    border: 1px solid #d09848;
    border-radius: 2px;
    box-sizing: border-box;
  }
  .prop-tools .ptool:nth-child(2) {
    margin: 0 3px 0 0;
  }
  .prop-tools .sep {
    margin: 0 2px 0 0;
  }
  .prop-tools .ptool:last-child {
    margin-left: 3px;
  }
  .az-t {
    font: bold 9px/9px "Liberation Serif", serif;
    color: #3050b0;
    position: absolute;
    left: 4px;
    top: 3px;
  }
  .prop-grid {
    height: 306px;
    flex: none;
    margin-left: 2px;
    display: flex;
    background: #ccd0d5;
    box-sizing: border-box;
    border-bottom: 1px solid #eee;
    padding-top: 1px;
  }
  .rows {
    width: 229px;
    flex: none;
  }
  .pr {
    height: 16px;
    display: flex;
    line-height: 15px;
    white-space: nowrap;
    box-sizing: border-box;
    background: #ccd0d5;
  }
  .pr.cat {
    font-weight: bold;
    align-items: center;
    gap: 6px;
    padding: 0 0 2px 3px;
  }
  .gut {
    width: 15px;
    flex: none;
    padding-left: 3px;
    box-sizing: border-box;
    display: flex;
    align-items: center;
    height: 15px;
  }
  .box {
    width: 9px;
    height: 9px;
    flex: none;
    box-sizing: border-box;
    border: 1px solid #111;
    background: #fff;
    font: 9px/7px "DejaVu Sans", sans-serif;
    text-align: center;
    color: #111;
  }
  .pn {
    width: 86px;
    flex: none;
    overflow: hidden;
    height: 15px;
    padding-left: 2px;
    box-sizing: border-box;
    background: #fff;
    color: #333;
  }
  .pn.cur {
    background: #ccd0d5;
  }
  .pv {
    flex: 1;
    height: 15px;
    margin-left: 1px;
    padding-left: 3px;
    background: #fff;
  }
  .pb {
    font-weight: bold;
  }
  .vscroll {
    flex: 1;
    background: #eceef0;
    border-right: 4px solid #ccd0d5;
    display: flex;
    flex-direction: column;
    align-items: center;
    position: relative;
    padding-top: 5px;
    box-sizing: border-box;
  }
  .up {
    border: 4px solid transparent;
    border-bottom: 4px solid #555;
    border-top: 0;
  }
  .down {
    position: absolute;
    bottom: 5px;
    border: 4px solid transparent;
    border-top: 4px solid #555;
    border-bottom: 0;
  }
  .vspace {
    height: 108px;
    flex: none;
  }
  .vthumb {
    width: 100%;
    height: 170px;
    flex: none;
    box-sizing: border-box;
    border: 1px solid #9a9da3;
    background: linear-gradient(90deg, #e6e7ea, #c4c7cc);
    display: flex;
    align-items: center;
    justify-content: center;
    font-size: 9px;
  }
  .descr {
    height: 61px;
    flex: none;
    margin-left: 1px;
    box-sizing: border-box;
    border-top: 1px solid #909399;
    padding: 5px 5px 0;
    display: flex;
    flex-direction: column;
    background: #ccd0d5;
    line-height: 15px;
  }
  .descr b {
    font-weight: bold;
  }
  .zoombar {
    flex: 1;
    display: flex;
    align-items: center;
    padding-left: 4px;
    border-left: 1px solid #555;
    background: linear-gradient(#74777c, #2e2f32);
    position: relative;
  }
  .views {
    display: flex;
    gap: 6px;
    padding: 2px 3px;
    border-radius: 2px;
    background: linear-gradient(#d8e0ec, #bcc2cc);
  }
  .pct {
    margin-left: 6px;
    color: #d8d8d8;
  }
  .slider {
    margin-left: 7px;
    width: 117px;
    display: flex;
    align-items: center;
    position: relative;
    justify-content: space-between;
  }
  .circle {
    width: 15px;
    height: 15px;
    box-sizing: border-box;
    border-radius: 50%;
    border: 1px solid #555;
    background: #c8ccd2;
    font: bold 13px/12px "DejaVu Sans", sans-serif;
    text-align: center;
    color: #555;
    z-index: 1;
  }
  .track {
    position: absolute;
    left: 10px;
    right: 10px;
    top: 50%;
    height: 1px;
    background: #e8e8e8;
  }
  .thumb {
    position: absolute;
    left: 54px;
    top: 0;
    width: 8px;
    height: 13px;
    box-sizing: border-box;
    border: 1px solid #555;
    background: #c8ccd2;
    clip-path: polygon(0 0, 100% 0, 100% 70%, 50% 100%, 0 70%);
  }
  .resize {
    position: absolute;
    right: 2px;
    bottom: 2px;
    width: 10px;
    height: 10px;
    background: radial-gradient(circle at 1px 1px, #ccc 1px, transparent 1px) 0 0/4px 4px;
  }
</style>
